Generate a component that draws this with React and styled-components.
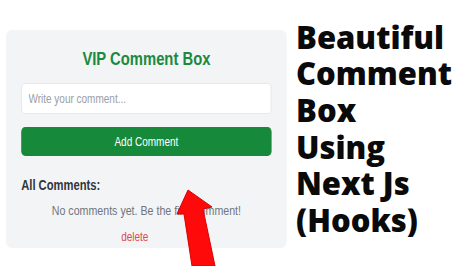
import React from "react";
import styled, { createGlobalStyle } from "styled-components";

const Global = createGlobalStyle`
  html, body { margin: 0; padding: 0; background: #ffffff; }
  body { width: 474px; height: 266px; overflow: hidden; font-family: "Liberation Sans", Arial, sans-serif; }
`;

const Page = styled.div`
  position: relative;
  display: flex;
  align-items: flex-start;
  width: 474px;
  height: 266px;
  overflow: hidden;
`;

const CardFrame = styled.div`
  width: 281px;
  margin: 30px 0 0 6px;
  flex: none;
`;

const Card = styled.div`
  width: 351px;
  box-sizing: border-box;
  transform: scaleX(0.8);
  transform-origin: left top;
  background: #f3f4f6;
  border-radius: 7px;
  padding: 18px 19px 3px;
  display: flex;
  flex-direction: column;
`;

const Title = styled.h2`
  margin: 0;
  font-size: 18.5px;
  line-height: 22px;
  font-weight: 700;
  text-align: center;
  color: #1b8a3e;
`;

const Input = styled.input`
  margin-top: 13px;
  height: 31px;
  box-sizing: border-box;
  width: 100%;
  border: 1px solid #e3e5e9;
  border-radius: 5px;
  background: #ffffff;
  padding: 0 8px;
  font-family: "Liberation Sans", Arial, sans-serif;
  font-size: 12.5px;
  color: #333;
  outline: none;
  &::placeholder { color: #9a9ea6; }
`;

const Button = styled.button`
  margin-top: 13px;
  height: 29px;
  width: 100%;
  border: none;
  border-radius: 5px;
  background: #17893a;
  color: #ffffff;
  font-family: "Liberation Sans", Arial, sans-serif;
  font-size: 12.5px;
  cursor: pointer;
`;

const SectionTitle = styled.h3`
  margin: 20.5px 0 0 0;
  font-size: 14px;
  line-height: 17px;
  font-weight: 700;
  color: #30343d;
`;

const Empty = styled.p`
  margin: 9.5px 0 0 0;
  font-size: 13.3px;
  line-height: 16px;
  text-align: center;
  color: #70747c;
`;

const ActionRow = styled.div`
  margin-top: 10px;
  display: flex;
  justify-content: center;
`;

const DeleteLink = styled.button`
  margin-right: 29px;
  padding: 0;
  border: none;
  background: none;
  font-family: "Liberation Sans", Arial, sans-serif;
  font-size: 12.5px;
  line-height: 16px;
  color: #df4a4e;
  cursor: pointer;
`;

const Heading = styled.h1`
  margin: 18.5px 0 0 9px;
  display: flex;
  flex-direction: column;
  font-family: "Open Sans", "Noto Sans", sans-serif;
  font-weight: 800;
  font-size: 31px;
  line-height: 36.7px;
  color: #0a0a0a;
`;

const HeadLine = styled.span`
  display: block;
  height: 36.7px;
  white-space: nowrap;
`;

const Arrow = styled.svg`
  position: absolute;
  left: 0;
  top: 0;
  pointer-events: none;
`;

const lines = ["Beautiful", "Comment", "Box", "Using", "Next Js", "(Hooks)"];

export default function App() {
  return (
    <>
      <Global />
      <Page>
        <CardFrame>
          <Card>
            <Title>VIP Comment Box</Title>
            <Input placeholder="Write your comment..." />
            <Button>Add Comment</Button>
            <SectionTitle>All Comments:</SectionTitle>
            <Empty>No comments yet. Be the first comment!</Empty>
            <ActionRow>
              <DeleteLink>delete</DeleteLink>
            </ActionRow>
          </Card>
        </CardFrame>
        <Heading>
          {lines.map((l) => (
            <HeadLine key={l}>{l}</HeadLine>
          ))}
        </Heading>
        <Arrow width="474" height="266" viewBox="0 0 474 266">
          <polygon
            points="188,190 212,207 203,209 215,266 192,266 184,214 177,214"
            fill="#ff0a0a"
            stroke="#d90000"
            strokeWidth="1"
            strokeLinejoin="round"
          />
        </Arrow>
      </Page>
    </>
  );
}
